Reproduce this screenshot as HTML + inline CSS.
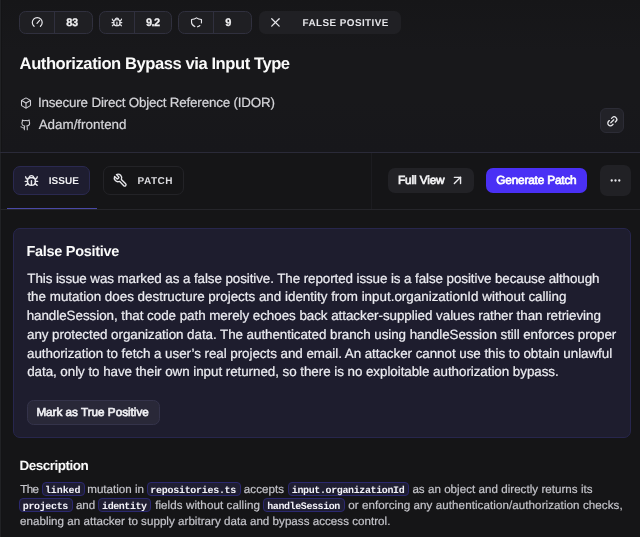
<!DOCTYPE html>
<html><head><meta charset="utf-8">
<style>
*{box-sizing:border-box;margin:0;padding:0}
html,body{width:640px;height:537px;overflow:hidden;background:#151517;font-family:"Liberation Sans",sans-serif}
body{position:relative}
.a{position:absolute}
.t{position:absolute;white-space:pre;text-rendering:geometricPrecision}
.hdr{left:0;top:0;width:640px;height:152px;background:linear-gradient(#161618 0,#18181b 34%,#18181b 66%,#17171b 100%)}
.pill{position:absolute;top:10.5px;height:23px;width:73.5px;border:1px solid #30303e;border-radius:6.5px;background:#1f1f23}
.pill i{position:absolute;left:34px;top:0;width:1px;height:21px;background:#30303e}
.chip{position:absolute;height:14px;border-radius:4px;background:#1f1e32;border:1px solid #2b2870}
svg{position:absolute;overflow:visible}
</style></head><body>
<div class="a hdr"></div>
<div class="a" style="left:0;top:0;width:1px;height:537px;background:#212225"></div>
<div class="a" style="left:1px;top:0;width:1px;height:537px;background:#141416"></div>
<div class="pill" style="left:19px"><i></i></div>
<div class="pill" style="left:98.75px"><i></i></div>
<div class="pill" style="left:178px"><i></i></div>
<div class="a" style="left:259px;top:10.5px;width:142px;height:23px;border-radius:6.5px;background:#202024"></div>
<div class="a" style="left:600px;top:108px;width:24px;height:25px;border-radius:6px;background:#222228;border:1px solid #2c2c36"></div>
<div class="a" style="left:0;top:152px;width:640px;height:1px;background:#2a2a38"></div>
<div class="a" style="left:13px;top:166px;width:77px;height:29px;border-radius:7px;background:#1e1d30;border:1px solid #2a2950"></div>
<div class="a" style="left:103px;top:166px;width:80.5px;height:29px;border-radius:7px;border:1px solid #232327"></div>
<div class="a" style="left:371px;top:153px;width:1px;height:56px;background:#1c1c20"></div>
<div class="a" style="left:0;top:208.5px;width:640px;height:1px;background:#25252a"></div>
<div class="a" style="left:7px;top:207.5px;width:89.5px;height:1.6px;background:#4a49a6"></div>
<div class="a" style="left:388px;top:168px;width:86px;height:25px;border-radius:7px;background:#222226"></div>
<div class="a" style="left:486px;top:168px;width:101px;height:25px;border-radius:7px;background:#4a30f5"></div>
<div class="a" style="left:600px;top:165px;width:31px;height:31px;border-radius:7px;background:#212125"></div>
<div class="a" style="left:13px;top:228px;width:618px;height:209.6px;border-radius:7px;background:#1e1d2e;border:1px solid #27264d"></div>
<div class="a" style="left:26.7px;top:399.6px;width:133px;height:25px;border-radius:6.5px;background:#292838;border:1px solid #34334a"></div>
<div class="chip" style="left:42px;top:482px;width:42.5px"></div>
<div class="chip" style="left:147px;top:482px;width:93.5px"></div>
<div class="chip" style="left:287.5px;top:482px;width:121.25px"></div>
<div class="chip" style="left:18.75px;top:498px;width:53.75px"></div>
<div class="chip" style="left:98px;top:498px;width:53.25px"></div>
<div class="chip" style="left:263.25px;top:498px;width:81.25px"></div>
<svg style="left:31.20px;top:15.96px" width="12.5" height="12.5" viewBox="0 0 24 24" fill="none" stroke="#e8e8ec" stroke-width="2.3" stroke-linecap="round" stroke-linejoin="round" ><path d="M11.500 14 16.500 8.500"/><path d="M5.900 19.800A9.500 9.500 0 1 1 18.100 19.800"/></svg>
<svg style="left:111.00px;top:16.48px" width="11.8" height="11.8" viewBox="0 0 24 24" fill="none" stroke="#e8e8ec" stroke-width="2.4" stroke-linecap="round" stroke-linejoin="round" ><path d="M12 19.900c-3.800 0-6.300-2.500-6.300-5.800v-2.300a4.200 4.200 0 0 1 4.200-4.200h4.200a4.200 4.200 0 0 1 4.200 4.200v2.300c0 3.300-2.500 5.800-6.300 5.800z"/><path d="M8.600 7.600a3.400 3.400 0 0 1 6.800 0"/><path d="M12 19.900v-7.500"/><path d="M5.700 10.200C4.300 9.800 3.100 8.300 2.600 6.200"/><path d="M18.300 10.200c1.400-.4 2.600-1.900 3.100-4"/><path d="M5.700 13.500H2.100"/><path d="M18.300 13.500h3.600"/><path d="M6.600 17.400C4.800 17.700 3.400 18.700 2.800 19.900"/><path d="M17.400 17.400c1.800.3 3.200 1.300 3.800 2.500"/></svg>
<svg style="left:189.90px;top:15.70px" width="13" height="13" viewBox="0 0 24 24" fill="none" stroke="#e8e8ec" stroke-width="2.1" stroke-linecap="round" stroke-linejoin="round" ><path d="M12 3.400C9.500 5.600 6 6.400 2.850 6.400V11.500C2.850 16.500 7 19.300 12 20.600C17 19.300 21.150 16.500 21.150 11.500V6.400C18 6.400 14.500 5.600 12 3.400Z" stroke-dasharray="25.500 5 5 5.500 100"/></svg>
<svg style="left:268.05px;top:14.95px" width="14.9" height="14.9" viewBox="0 0 24 24" fill="none" stroke="#e8e8ec" stroke-width="2" stroke-linecap="round" stroke-linejoin="round" ><path d="M18 6 6 18"/><path d="m6 6 12 12"/></svg>
<svg style="left:19.50px;top:96.75px" width="12" height="12" viewBox="0 0 24 24" fill="none" stroke="#d0d0d6" stroke-width="2.1" stroke-linecap="round" stroke-linejoin="round" ><path d="M21 8a2 2 0 0 0-1-1.730l-7-4a2 2 0 0 0-2 0l-7 4A2 2 0 0 0 3 8v8a2 2 0 0 0 1 1.730l7 4a2 2 0 0 0 2 0l7-4A2 2 0 0 0 21 16Z"/><path d="m3.300 7 8.700 5 8.700-5"/><path d="M12 22V12"/></svg>
<svg style="left:19.93px;top:118.70px" width="11.6" height="11.6" viewBox="0 0 24 24" fill="none" stroke="#d0d0d6" stroke-width="2.1" stroke-linecap="round" stroke-linejoin="round" ><path d="M15 22v-4a4.800 4.800 0 0 0-1-3.500c3 0 6-2 6-5.500.08-1.250-.27-2.480-1-3.500.28-1.150.28-2.350 0-3.500 0 0-1 0-3 1.500-2.640-.5-5.360-.5-8 0C6 2 5 2 5 2c-.3 1.150-.3 2.350 0 3.500A5.403 5.403 0 0 0 4 9c0 3.500 3 5.500 6 5.500-.39.490-.68 1.050-.85 1.650-.17.600-.22 1.230-.15 1.850v4"/><path d="M9 18c-4.510 2-5-2-7-2"/></svg>
<svg style="left:606.05px;top:114.80px" width="12.6" height="12.6" viewBox="0 0 24 24" fill="none" stroke="#e8e8ec" stroke-width="2.4" stroke-linecap="round" stroke-linejoin="round" ><g transform="rotate(-45 12 12)"><path d="M9 17H7A5 5 0 0 1 7 7h2"/><path d="M15 7h2a5 5 0 1 1 0 10h-2"/><path d="M8 12h8"/></g></svg>
<svg style="left:23.65px;top:172.97px" width="14.9" height="14.9" viewBox="0 0 24 24" fill="none" stroke="#e8e8ec" stroke-width="2.3" stroke-linecap="round" stroke-linejoin="round" ><path d="M12 19.900c-3.800 0-6.300-2.500-6.300-5.800v-2.300a4.200 4.200 0 0 1 4.200-4.200h4.200a4.200 4.200 0 0 1 4.200 4.200v2.300c0 3.300-2.500 5.800-6.300 5.800z"/><path d="M8.600 7.600a3.400 3.400 0 0 1 6.800 0"/><path d="M12 19.900v-7.500"/><path d="M5.700 10.200C4.300 9.800 3.100 8.300 2.600 6.200"/><path d="M18.300 10.200c1.400-.4 2.600-1.900 3.100-4"/><path d="M5.700 13.500H2.100"/><path d="M18.300 13.500h3.600"/><path d="M6.600 17.400C4.800 17.700 3.400 18.700 2.800 19.900"/><path d="M17.400 17.400c1.800.3 3.200 1.300 3.800 2.500"/></svg>
<svg style="left:113.15px;top:172.55px" width="14.9" height="14.9" viewBox="0 0 24 24" fill="none" stroke="#e6e6ea" stroke-width="2.2" stroke-linecap="round" stroke-linejoin="round" ><path transform="translate(24 0) scale(-1 1)" d="M14.700 6.300a1 1 0 0 0 0 1.400l1.600 1.600a1 1 0 0 0 1.400 0l3.770-3.770a6 6 0 0 1-7.940 7.940l-6.910 6.910a2.120 2.120 0 0 1-3-3l6.910-6.910a6 6 0 0 1 7.940-7.940l-3.760 3.760z"/></svg>
<svg style="left:450.40px;top:173.30px" width="14.9" height="14.9" viewBox="0 0 24 24" fill="none" stroke="#e8e8ec" stroke-width="2.3" stroke-linecap="round" stroke-linejoin="round" ><path d="M7 7h10v10"/><path d="M7 17 17 7"/></svg>
<svg style="left:608.75px;top:174.25px" width="13" height="13" viewBox="0 0 24 24" fill="none" stroke="#e8e8ec" stroke-width="2" stroke-linecap="round" stroke-linejoin="round" ><circle cx="12" cy="12" r="1.150"/><circle cx="19" cy="12" r="1.150"/><circle cx="5" cy="12" r="1.150"/></svg>
<div class="a" style="left:0;top:0;width:640px;height:537px;will-change:transform;filter:blur(0.35px)">
<span id="t0" class="t" style="left:66.24px;top:18.00px;font-size:11.0px;line-height:11.0px;font-weight:bold;color:#f0f0f2;font-family:'Liberation Sans',sans-serif;letter-spacing:-0.339px;-webkit-text-stroke:0.25px #f0f0f2">83</span>
<span id="t1" class="t" style="left:146.01px;top:18.00px;font-size:11.0px;line-height:11.0px;font-weight:bold;color:#f0f0f2;font-family:'Liberation Sans',sans-serif;letter-spacing:-0.563px;-webkit-text-stroke:0.25px #f0f0f2">9.2</span>
<span id="t2" class="t" style="left:225.29px;top:18.00px;font-size:11.0px;line-height:11.0px;font-weight:bold;color:#f0f0f2;font-family:'Liberation Sans',sans-serif;letter-spacing:0.000px;-webkit-text-stroke:0.25px #f0f0f2">9</span>
<span id="t3" class="t" style="left:302.59px;top:19.00px;font-size:9.9px;line-height:9.9px;font-weight:bold;color:#e6e6ea;font-family:'Liberation Sans',sans-serif;letter-spacing:0.434px">FALSE POSITIVE</span>
<span id="t4" class="t" style="left:19.61px;top:56.00px;font-size:16.6px;line-height:16.6px;font-weight:bold;color:#fafafa;font-family:'Liberation Sans',sans-serif;letter-spacing:-0.442px">Authorization Bypass via Input Type</span>
<span id="t5" class="t" style="left:38.06px;top:96.00px;font-size:13.4px;line-height:13.4px;font-weight:normal;color:#d6d6da;font-family:'Liberation Sans',sans-serif;letter-spacing:-0.191px;-webkit-text-stroke:0.2px #d6d6da">Insecure Direct Object Reference (IDOR)</span>
<span id="t6" class="t" style="left:38.65px;top:118.00px;font-size:13.4px;line-height:13.4px;font-weight:normal;color:#d6d6da;font-family:'Liberation Sans',sans-serif;letter-spacing:0.003px;-webkit-text-stroke:0.2px #d6d6da">Adam/frontend</span>
<span id="t7" class="t" style="left:48.70px;top:177.00px;font-size:10.0px;line-height:10.0px;font-weight:bold;color:#ededf0;font-family:'Liberation Sans',sans-serif;letter-spacing:0.086px">ISSUE</span>
<span id="t8" class="t" style="left:137.51px;top:177.00px;font-size:10.0px;line-height:10.0px;font-weight:bold;color:#dcdce0;font-family:'Liberation Sans',sans-serif;letter-spacing:0.514px">PATCH</span>
<span id="t9" class="t" style="left:398.05px;top:175.00px;font-size:11.8px;line-height:11.8px;font-weight:normal;color:#f2f2f4;font-family:'Liberation Sans',sans-serif;letter-spacing:-0.139px;-webkit-text-stroke:0.7px #f2f2f4">Full View</span>
<span id="t10" class="t" style="left:496.28px;top:175.00px;font-size:11.8px;line-height:11.8px;font-weight:normal;color:#ffffff;font-family:'Liberation Sans',sans-serif;letter-spacing:-0.171px;-webkit-text-stroke:0.7px #ffffff">Generate Patch</span>
<span id="t11" class="t" style="left:26.40px;top:245.00px;font-size:14.5px;line-height:14.5px;font-weight:bold;color:#fafafa;font-family:'Liberation Sans',sans-serif;letter-spacing:-0.292px">False Positive</span>
<span id="t12" class="t" style="left:27.29px;top:272.00px;font-size:13.4px;line-height:13.4px;font-weight:normal;color:#ececf1;font-family:'Liberation Sans',sans-serif;letter-spacing:-0.084px;-webkit-text-stroke:0.22px #ececf1">This issue was marked as a false positive. The reported issue is a false positive because although</span>
<span id="t13" class="t" style="left:27.40px;top:290.00px;font-size:13.4px;line-height:13.4px;font-weight:normal;color:#ececf1;font-family:'Liberation Sans',sans-serif;letter-spacing:0.001px;-webkit-text-stroke:0.22px #ececf1">the mutation does destructure projects and identity from input.organizationId without calling</span>
<span id="t14" class="t" style="left:26.67px;top:309.00px;font-size:13.4px;line-height:13.4px;font-weight:normal;color:#ececf1;font-family:'Liberation Sans',sans-serif;letter-spacing:-0.044px;-webkit-text-stroke:0.22px #ececf1">handleSession, that code path merely echoes back attacker-supplied values rather than retrieving</span>
<span id="t15" class="t" style="left:27.02px;top:328.00px;font-size:13.4px;line-height:13.4px;font-weight:normal;color:#ececf1;font-family:'Liberation Sans',sans-serif;letter-spacing:-0.054px;-webkit-text-stroke:0.22px #ececf1">any protected organization data. The authenticated branch using handleSession still enforces proper</span>
<span id="t16" class="t" style="left:27.07px;top:347.00px;font-size:13.4px;line-height:13.4px;font-weight:normal;color:#ececf1;font-family:'Liberation Sans',sans-serif;letter-spacing:-0.046px;-webkit-text-stroke:0.22px #ececf1">authorization to fetch a user’s real projects and email. An attacker cannot use this to obtain unlawful</span>
<span id="t17" class="t" style="left:27.16px;top:365.00px;font-size:13.4px;line-height:13.4px;font-weight:normal;color:#ececf1;font-family:'Liberation Sans',sans-serif;letter-spacing:-0.048px;-webkit-text-stroke:0.22px #ececf1">data, only to have their own input returned, so there is no exploitable authorization bypass.</span>
<span id="t18" class="t" style="left:36.39px;top:407.00px;font-size:11.7px;line-height:11.7px;font-weight:normal;color:#f0f0f4;font-family:'Liberation Sans',sans-serif;letter-spacing:0.001px;-webkit-text-stroke:0.65px #f0f0f4">Mark as True Positive</span>
<span id="t19" class="t" style="left:19.51px;top:459.00px;font-size:13.5px;line-height:13.5px;font-weight:bold;color:#fafafa;font-family:'Liberation Sans',sans-serif;letter-spacing:-0.511px">Description</span>
<span id="t20" class="t" style="left:20.37px;top:484.00px;font-size:11.6px;line-height:11.6px;font-weight:normal;color:#c4c4ca;font-family:'Liberation Sans',sans-serif;letter-spacing:-0.680px;-webkit-text-stroke:0.2px #c4c4ca">The</span>
<span id="t21" class="t" style="left:87.26px;top:484.00px;font-size:11.6px;line-height:11.6px;font-weight:normal;color:#c4c4ca;font-family:'Liberation Sans',sans-serif;letter-spacing:0.007px;-webkit-text-stroke:0.2px #c4c4ca">mutation in</span>
<span id="t22" class="t" style="left:243.80px;top:484.00px;font-size:11.6px;line-height:11.6px;font-weight:normal;color:#c4c4ca;font-family:'Liberation Sans',sans-serif;letter-spacing:0.054px;-webkit-text-stroke:0.2px #c4c4ca">accepts</span>
<span id="t23" class="t" style="left:412.39px;top:484.00px;font-size:11.6px;line-height:11.6px;font-weight:normal;color:#c4c4ca;font-family:'Liberation Sans',sans-serif;letter-spacing:0.029px;-webkit-text-stroke:0.2px #c4c4ca">as an object and directly returns its</span>
<span id="t24" class="t" style="left:76.08px;top:500.00px;font-size:11.6px;line-height:11.6px;font-weight:normal;color:#c4c4ca;font-family:'Liberation Sans',sans-serif;letter-spacing:-0.155px;-webkit-text-stroke:0.2px #c4c4ca">and</span>
<span id="t25" class="t" style="left:155.15px;top:500.00px;font-size:11.6px;line-height:11.6px;font-weight:normal;color:#c4c4ca;font-family:'Liberation Sans',sans-serif;letter-spacing:0.077px;-webkit-text-stroke:0.2px #c4c4ca">fields without calling</span>
<span id="t26" class="t" style="left:348.17px;top:500.00px;font-size:11.6px;line-height:11.6px;font-weight:normal;color:#c4c4ca;font-family:'Liberation Sans',sans-serif;letter-spacing:0.073px;-webkit-text-stroke:0.2px #c4c4ca">or enforcing any authentication/authorization checks,</span>
<span id="t27" class="t" style="left:19.99px;top:516.00px;font-size:11.6px;line-height:11.6px;font-weight:normal;color:#c4c4ca;font-family:'Liberation Sans',sans-serif;letter-spacing:0.025px;-webkit-text-stroke:0.2px #c4c4ca">enabling an attacker to supply arbitrary data and bypass access control.</span>
<span id="t28" class="t" style="left:44.92px;top:487.00px;font-size:10.0px;line-height:10.0px;font-weight:bold;color:#f2f2f8;font-family:'Liberation Mono',monospace;letter-spacing:-0.087px">linked</span>
<span id="t29" class="t" style="left:150.37px;top:487.00px;font-size:10.0px;line-height:10.0px;font-weight:bold;color:#f2f2f8;font-family:'Liberation Mono',monospace;letter-spacing:-0.290px">repositories.ts</span>
<span id="t30" class="t" style="left:291.76px;top:487.00px;font-size:10.0px;line-height:10.0px;font-weight:bold;color:#f2f2f8;font-family:'Liberation Mono',monospace;letter-spacing:-0.370px">input.organizationId</span>
<span id="t31" class="t" style="left:22.78px;top:503.00px;font-size:10.0px;line-height:10.0px;font-weight:bold;color:#f2f2f8;font-family:'Liberation Mono',monospace;letter-spacing:-0.351px">projects</span>
<span id="t32" class="t" style="left:102.11px;top:503.00px;font-size:10.0px;line-height:10.0px;font-weight:bold;color:#f2f2f8;font-family:'Liberation Mono',monospace;letter-spacing:-0.435px">identity</span>
<span id="t33" class="t" style="left:267.24px;top:503.00px;font-size:10.0px;line-height:10.0px;font-weight:bold;color:#f2f2f8;font-family:'Liberation Mono',monospace;letter-spacing:-0.409px">handleSession</span>
</div>
</body></html>
